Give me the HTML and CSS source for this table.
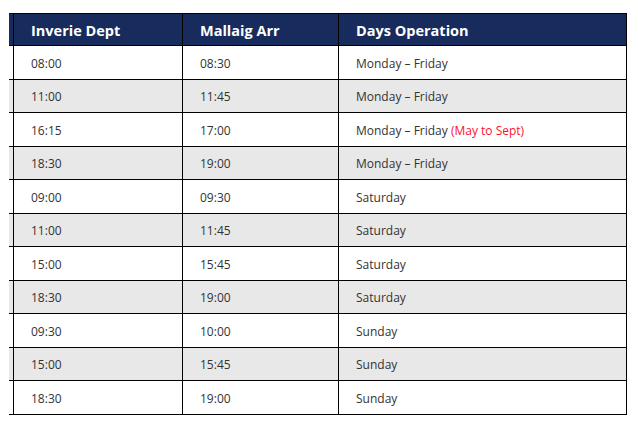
FILE: index.html
```html
<!DOCTYPE html>
<html>
<head>
<meta charset="utf-8">
<link rel="stylesheet" href="styles.css">
</head>
<body>
<table class="timetable">
  <thead>
    <tr><th class="gap"></th><th class="c1">Inverie Dept</th><th class="c2">Mallaig Arr</th><th class="c3">Days Operation</th></tr>
  </thead>
  <tbody>
    <tr><td class="gap"></td><td>08:00</td><td>08:30</td><td>Monday – Friday</td></tr>
    <tr class="alt"><td class="gap"></td><td>11:00</td><td>11:45</td><td>Monday – Friday</td></tr>
    <tr><td class="gap"></td><td>16:15</td><td>17:00</td><td>Monday – Friday <span class="note">(May to Sept)</span></td></tr>
    <tr class="alt"><td class="gap"></td><td>18:30</td><td>19:00</td><td>Monday – Friday</td></tr>
    <tr><td class="gap"></td><td>09:00</td><td>09:30</td><td>Saturday</td></tr>
    <tr class="alt"><td class="gap"></td><td>11:00</td><td>11:45</td><td>Saturday</td></tr>
    <tr><td class="gap"></td><td>15:00</td><td>15:45</td><td>Saturday</td></tr>
    <tr class="alt"><td class="gap"></td><td>18:30</td><td>19:00</td><td>Saturday</td></tr>
    <tr><td class="gap"></td><td>09:30</td><td>10:00</td><td>Sunday</td></tr>
    <tr class="alt"><td class="gap"></td><td>15:00</td><td>15:45</td><td>Sunday</td></tr>
    <tr><td class="gap"></td><td>18:30</td><td>19:00</td><td>Sunday</td></tr>
  </tbody>
</table>
</body>
</html>
```
FILE: styles.css
```css
html, body {
  margin: 0;
  padding: 0;
  background: #ffffff;
}
body {
  padding: 13px 0 0 9px;
  font-family: "Open Sans", "Noto Sans", sans-serif;
}
.timetable {
  border-collapse: collapse;
  table-layout: fixed;
  width: 618px;
}
.timetable th,
.timetable td {
  border: 1px solid #000;
  padding: 2px 0 0 17px;
  text-align: left;
  vertical-align: middle;
  overflow: hidden;
  white-space: nowrap;
}
.timetable th {
  background: #172b5d;
  color: #ffffff;
  font-weight: 700;
  font-size: 14.5px;
  height: 29px;
}
.timetable td {
  font-size: 12px;
  color: #333333;
  height: 30.5px;
}
.timetable .gap {
  width: 4px;
  padding: 0;
  border-left: none;
}
.timetable th.c1 { width: 151px; }
.timetable th.c2 { width: 138px; }
.timetable th.c3 { width: 270px; }
.timetable tr.alt td { background: #e8e8e8; }
.note { color: #ff0f2f; }
```
